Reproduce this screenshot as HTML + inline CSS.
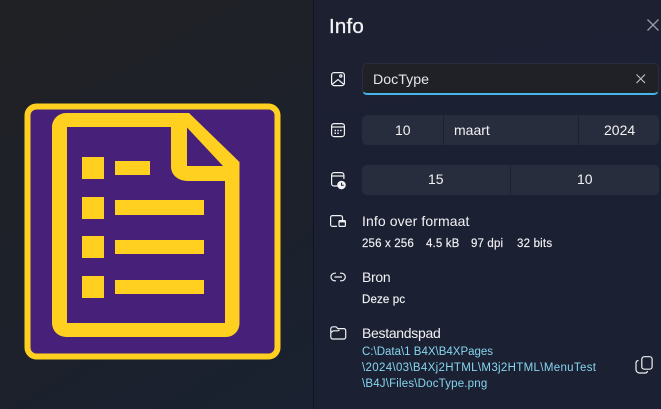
<!DOCTYPE html>
<html><head><meta charset="utf-8"><style>
html,body{margin:0;padding:0;width:661px;height:409px;overflow:hidden;background:#1b2033}
body{position:relative;font-family:"Liberation Sans",sans-serif;color:#f2f2f4}
.t{position:absolute;white-space:nowrap;line-height:1}
.box{position:absolute;background:#282d3d;border-radius:5px;box-sizing:border-box}
.sep{position:absolute;width:1px;background:#1b2033}
svg{position:absolute;overflow:visible}
.i{fill:none;stroke:#f2f2f4;stroke-width:1.200}
.p{color:#86d6ee;font-size:11.500px}
.s{font-size:11.500px;letter-spacing:.15px;-webkit-text-stroke:.15px #f2f2f4}
</style></head><body>
<div style="position:absolute;left:0;top:0;width:313px;height:409px;background:linear-gradient(150deg,#202124 0%,#1e2128 35%,#1b212d 75%,#1a2130 100%)"></div>
<div style="position:absolute;left:313px;top:0;width:1px;height:409px;background:#11131f"></div>
<div style="position:absolute;left:314px;top:0;width:347px;height:409px;background:linear-gradient(170deg,#1c2030 0%,#1b2033 40%)"></div>

<svg style="left:0;top:0" width="313" height="409">
<rect x="27.500" y="106.500" width="250" height="250" rx="9" fill="#472079" stroke="#ffd020" stroke-width="6"/>
<path fill="#ffd020" fill-rule="evenodd" d="M66 113H189L239.500 162V323.500A13.500 13.500 0 0 1 226 337H66A14 14 0 0 1 52 323V127A14 14 0 0 1 66 113ZM67 127V323H225V181H187A16 14 0 0 1 171 167V127ZM187 127.500V166H223Z"/>
<g fill="#ffd020">
<rect x="82" y="157" width="22" height="22"/><rect x="82" y="197" width="22" height="22"/><rect x="82" y="236" width="22" height="22"/><rect x="82" y="276" width="22" height="22"/>
<rect x="115" y="161" width="35" height="14"/><rect x="115" y="200" width="89" height="15"/><rect x="115" y="240" width="89" height="14"/><rect x="115" y="280" width="89" height="14"/>
</g></svg>

<div class="t" style="left:329px;top:17px;font-size:20.500px;font-weight:400;letter-spacing:.2px;-webkit-text-stroke:.3px #f2f2f4">Info</div>
<svg style="left:647px;top:19px" width="12" height="12"><path d="M.5.500L11.500 11.500M11.500 .500L.500 11.500" stroke="#9a9ca6" stroke-width="1.300" fill="none"/></svg>

<!-- image icon -->
<svg style="left:331px;top:72px" width="14" height="14"><rect x=".6" y=".6" width="12.800" height="13" rx="2.500" class="i"/><path class="i" d="M1 12.500L7 7.500L13 12.500"/><circle cx="9.800" cy="4" r="1.100" class="i"/></svg>
<!-- name input -->
<div style="position:absolute;left:362px;top:63px;width:297px;height:32px;box-sizing:border-box;background:#202126;border:1px solid #2a2e3b;border-bottom:2px solid #48b5ea;border-radius:5px"></div>
<div class="t" style="left:373px;top:72.500px;font-size:14.200px;color:#e6e6e8">DocType</div>
<svg style="left:636px;top:74px" width="10" height="10"><path d="M.5.500L9 9M9 .500L.500 9" stroke="#c2c3c8" stroke-width="1.100" fill="none"/></svg>

<!-- calendar -->
<svg style="left:331px;top:123px" width="14" height="15"><rect x=".6" y=".6" width="12.800" height="13" rx="2.500" class="i"/><path class="i" d="M1 4H13"/><path stroke="#f2f2f4" stroke-width="1.500" d="M3.500 7.500h1.500M6.300 7.500h1.500M9.100 7.500h1.500M3.500 10.300h1.500M6.300 10.300h1.500" fill="none"/></svg>
<div class="box" style="left:362px;top:115px;width:297px;height:30px"></div>
<div class="sep" style="left:443px;top:115px;height:30px"></div>
<div class="sep" style="left:578px;top:115px;height:30px"></div>
<div class="t" style="left:395px;top:122.500px;font-size:14px">10</div>
<div class="t" style="left:454px;top:122.500px;font-size:14px">maart</div>
<div class="t" style="left:604px;top:122.500px;font-size:14px">2024</div>

<!-- clock -->
<svg style="left:331px;top:172px" width="16" height="17"><path class="i" d="M7 14H3A2.400 2.400 0 0 1 .6 11.600V3A2.400 2.400 0 0 1 3 .6H10.500A2.400 2.400 0 0 1 12.900 3V7M1 4H13"/><circle cx="10.500" cy="13" r="4.300" fill="#f2f2f4"/><path d="M10.500 10.800V13.300H12.800" stroke="#1b2033" stroke-width="1" fill="none"/></svg>
<div class="box" style="left:362px;top:165px;width:297px;height:30px"></div>
<div class="sep" style="left:510px;top:165px;height:30px"></div>
<div class="t" style="left:428px;top:172px;font-size:14px">15</div>
<div class="t" style="left:577px;top:172px;font-size:14px">10</div>

<!-- format -->
<svg style="left:330px;top:215px" width="17" height="13"><path class="i" d="M7 11.400H2.500A1.900 1.900 0 0 1 .6 9.500V2.500A1.900 1.900 0 0 1 2.500 .6H10.500A2 2 0 0 1 12.500 2.600V5"/><rect x="9" y="5.600" width="6.400" height="5.800" rx="1" class="i"/><path d="M9.500 6.500H15" stroke="#f2f2f4" stroke-width="1.800" fill="none"/></svg>
<div class="t" style="left:362px;top:214px;font-size:14px;letter-spacing:.1px">Info over formaat</div>
<div class="t s" style="left:362px;top:239px">256 x 256</div>
<div class="t s" style="left:426px;top:239px">4.5 kB</div>
<div class="t s" style="left:471px;top:239px">97 dpi</div>
<div class="t s" style="left:517px;top:239px;letter-spacing:.2px">32 bits</div>

<!-- link -->
<svg style="left:330px;top:272px" width="17" height="10"><path class="i" d="M6 1.200H4.800A3.800 3.800 0 0 0 4.800 8.800H6M10 1.200H11.500A3.800 3.800 0 0 1 11.500 8.800H10M4.500 5H12"/></svg>
<div class="t" style="left:362px;top:270px;font-size:14px;letter-spacing:-.3px">Bron</div>
<div class="t s" style="left:362px;top:295px">Deze pc</div>

<!-- folder -->
<svg style="left:330px;top:326px" width="17" height="14"><path class="i" d="M.8 11V2.800A2 2 0 0 1 2.800 .8H5.300A2 2 0 0 1 6.600 1.300L7.800 2.600H13.800A1.900 1.900 0 0 1 15.700 4.500V11A2 2 0 0 1 13.700 13H2.800A2 2 0 0 1 .8 11ZM1 6.500L2.800 5.200A2 2 0 0 1 4 4.800H8L9.500 4"/></svg>
<div class="t" style="left:362px;top:326px;font-size:14px;letter-spacing:-.3px">Bestandspad</div>
<div class="t p" style="left:362px;top:347px;letter-spacing:0">C:\Data\1 B4X\B4XPages</div>
<div class="t p" style="left:362px;top:363px;letter-spacing:.33px">\2024\03\B4Xj2HTML\M3j2HTML\MenuTest</div>
<div class="t p" style="left:362px;top:379px;letter-spacing:.18px">\B4J\Files\DocType.png</div>
<svg style="left:635px;top:356px" width="18" height="18"><rect x="6.800" y=".7" width="10.300" height="12.500" rx="2.500" class="i" stroke-width="1.300"/><path class="i" stroke-width="1.300" d="M3.500 4.500A2.400 2.400 0 0 0 1 7V13.500A3.500 3.500 0 0 0 4.500 17H10A2.500 2.500 0 0 0 12.500 15"/></svg>
</body></html>
